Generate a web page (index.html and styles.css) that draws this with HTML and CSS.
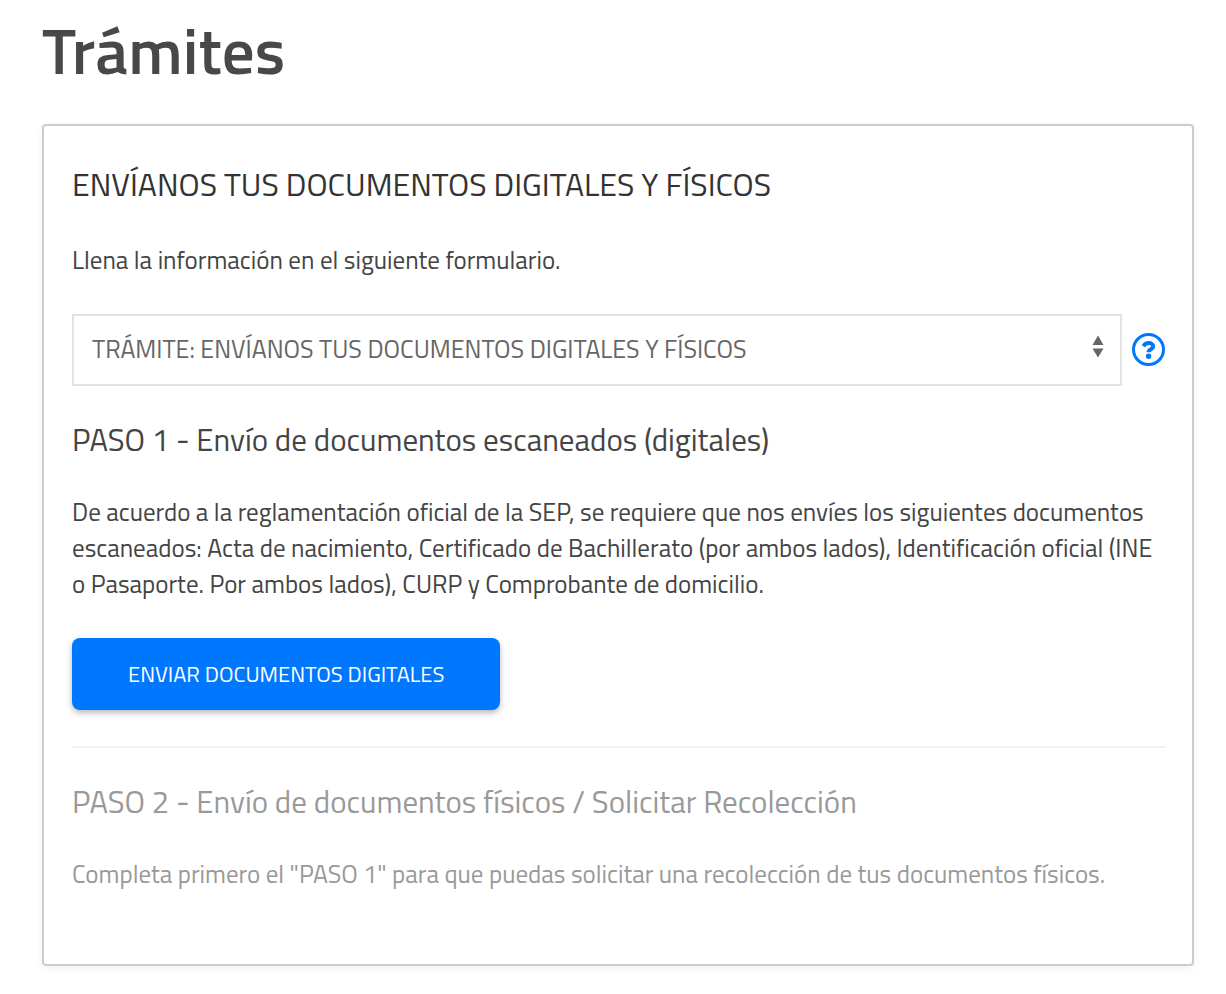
FILE: index.html
```html
<!DOCTYPE html>
<html lang="es">
<head>
    <meta charset="UTF-8">
    <meta name="viewport" content="width=device-width, initial-scale=1.0">
    <title>Trámites</title>
    <link rel="stylesheet" href="styles.css">
</head>
<body>

<main>
    <h1>Trámites</h1>

    <section class="card">
        <h2>ENVÍANOS TUS DOCUMENTOS DIGITALES Y FÍSICOS</h2>
        <p>Llena la información en el siguiente formulario.</p>

        <div class="select-row">
            <div class="select-box">
                <select class="tramite-select" aria-label="Trámite">
                    <option>TRÁMITE: ENVÍANOS TUS DOCUMENTOS DIGITALES Y FÍSICOS</option>
                </select>
                <svg class="select-arrows" width="12" height="24" viewBox="0 0 12 24" aria-hidden="true">
                    <path d="M6 0.5L11.5 10H0.5zM6 22.5L11.5 13.5H0.5z" fill="#666"/>
                </svg>
            </div>
            <button type="button" class="help-btn" aria-label="Ayuda">
                <svg width="34" height="34" viewBox="0 0 34 34" fill="none" stroke="#0077ff">
                    <circle cx="16.5" cy="16.5" r="15" stroke-width="3"/>
                    <path d="M11.4 13.2C12.8 10.9 14.6 10.1 16.6 10.1C19.3 10.1 21.2 11.5 21.2 13.5C21.2 16.4 16.6 16 16.6 19.2" stroke-width="4"/>
                    <circle cx="16.6" cy="23.3" r="2.7" fill="#0077ff" stroke="none"/>
                </svg>
            </button>
        </div>

        <h3>PASO 1 - Envío de documentos escaneados (digitales)</h3>
        <p>De acuerdo a la reglamentación oficial de la SEP, se requiere que nos envíes los siguientes documentos escaneados: Acta de nacimiento, Certificado de Bachillerato (por ambos lados), Identificación oficial (INE o Pasaporte. Por ambos lados), CURP y Comprobante de domicilio.</p>
        <button type="button" class="send-btn">ENVIAR DOCUMENTOS DIGITALES</button>

        <hr>

        <div class="disabled-step">
            <h3>PASO 2 - Envío de documentos físicos / Solicitar Recolección</h3>
            <p>Completa primero el "PASO 1" para que puedas solicitar una recolección de tus documentos físicos.</p>
        </div>
    </section>
</main>

</body>
</html>
```
FILE: styles.css
```css
* {
    box-sizing: border-box;
}
body {
    margin: 0;
    background-color: #fff;
    color: #444;
    font-family: "Titillium Web", Roboto, sans-serif;
    font-size: 25px;
    line-height: 36px;
}
main {
    padding: 14px 32px 28px 42px;
}
h1 {
    margin: 0 0 38px;
    color: #484848;
    font-size: 65px;
    font-weight: 600;
    line-height: 72px;
}
.card {
    padding: 36px 26px 36px 28px;
    border: 2px solid #ccc;
    border-radius: 4px;
    box-shadow: 0 2px 8px rgba(0, 0, 0, 0.06);
}
h2 {
    margin: 0 0 36px;
    color: #333;
    font-size: 32px;
    font-weight: 400;
    line-height: 44px;
}
h3 {
    margin: 0 0 36px;
    font-size: 31px;
    font-weight: 400;
    line-height: 36px;
}
p {
    margin: 0 0 36px;
}
.select-row {
    display: flex;
    align-items: center;
    gap: 10px;
    margin-bottom: 36px;
}
.select-box {
    position: relative;
    flex: 1;
}
.tramite-select {
    display: block;
    width: 100%;
    height: 72px;
    padding: 0 48px 2px 18px;
    border: 2px solid #e2e2e2;
    border-radius: 0;
    background-color: #fff;
    color: #666;
    font-family: inherit;
    font-size: 25px;
    appearance: none;
}
.select-arrows {
    position: absolute;
    top: 21px;
    right: 18px;
    pointer-events: none;
}
.help-btn {
    display: flex;
    padding: 0;
    border: none;
    background: none;
    cursor: pointer;
}
.send-btn {
    display: block;
    height: 72px;
    padding: 0 56px;
    border: none;
    border-radius: 8px;
    background-color: #0077ff;
    box-shadow: 0 3px 6px rgba(0, 0, 0, 0.28);
    color: #fff;
    font-family: inherit;
    font-size: 22px;
    cursor: pointer;
}
hr {
    height: 2px;
    margin: 36px 0;
    border: none;
    background-color: #f2f2f2;
}
.disabled-step {
    color: #999;
}
```
